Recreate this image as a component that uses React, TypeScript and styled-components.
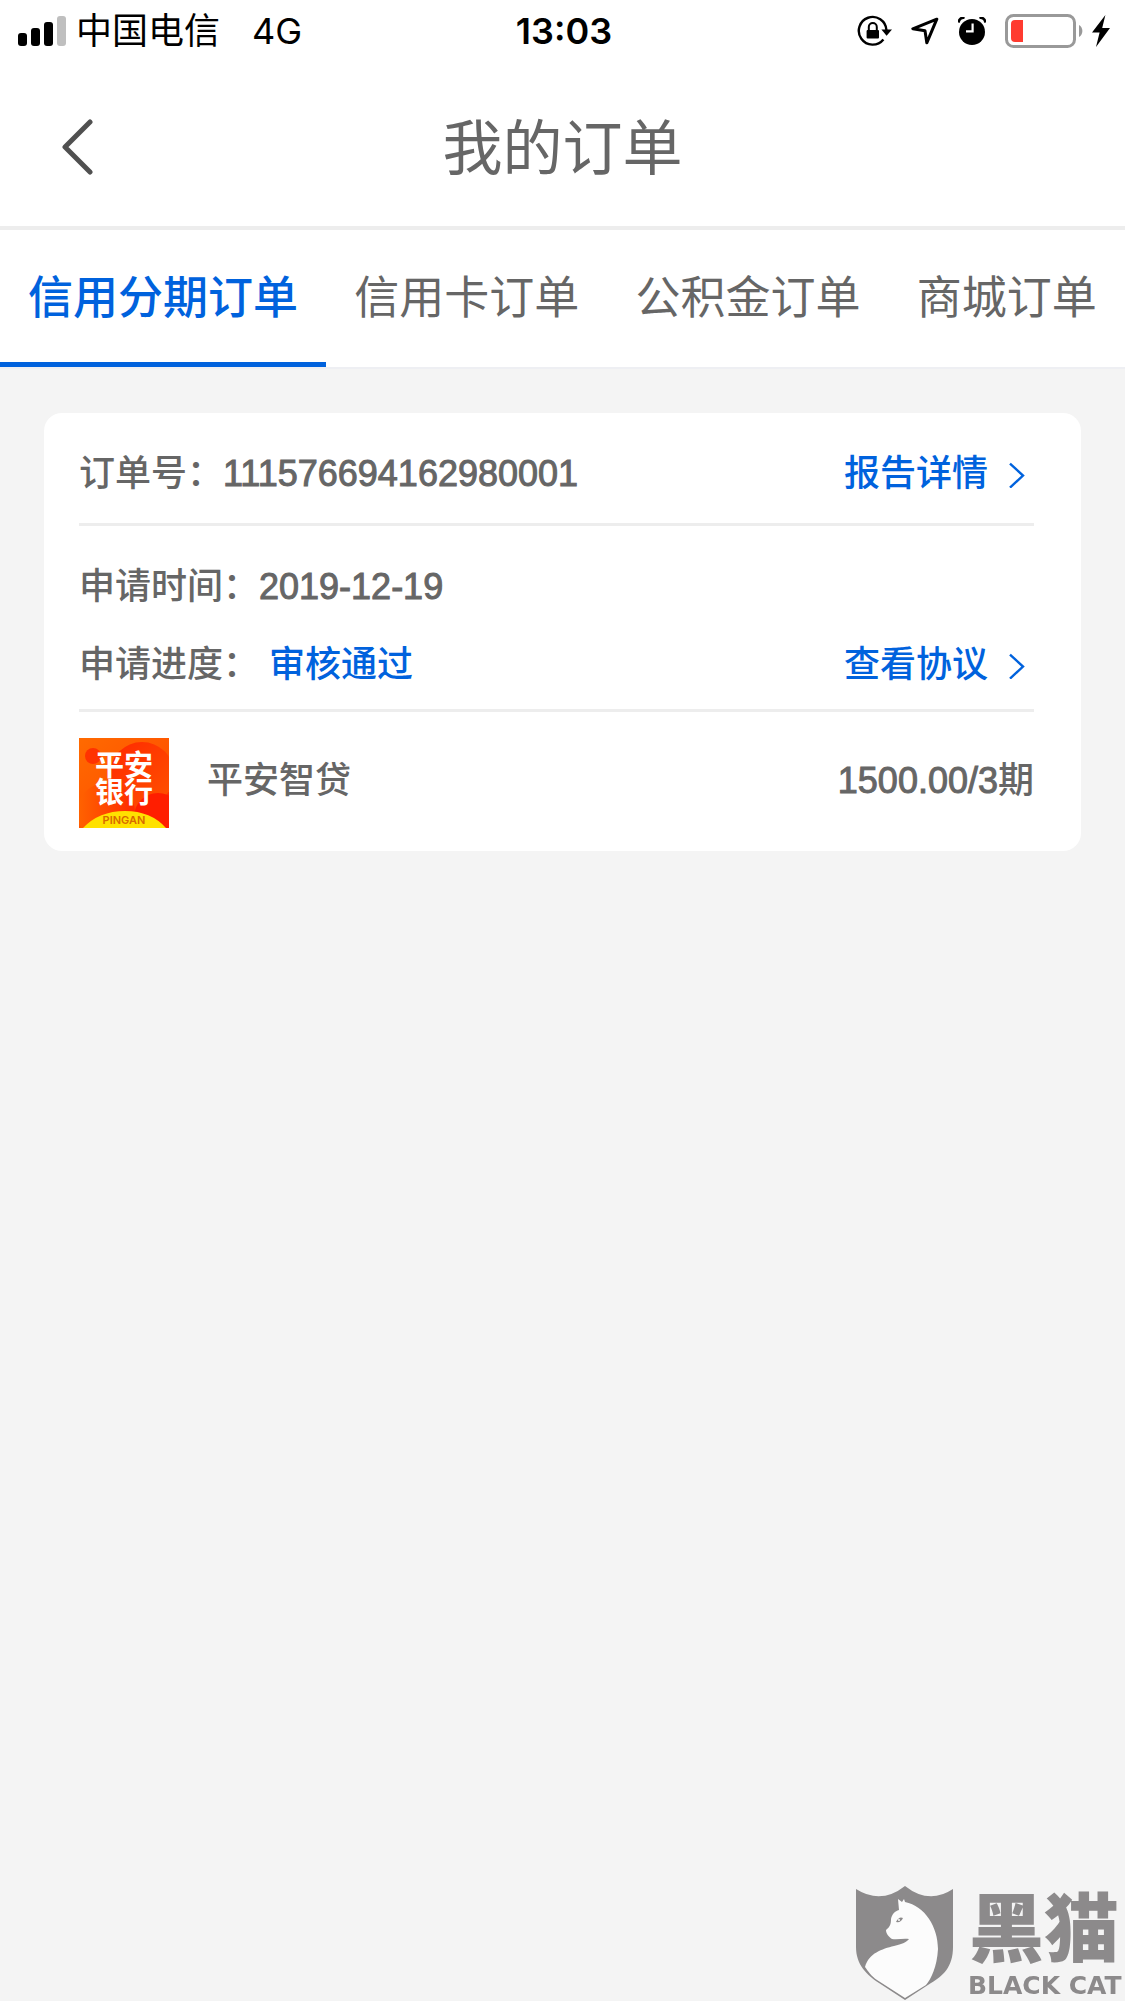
import React from "react";
import styled, { createGlobalStyle } from "styled-components";

const BLUE = "#0062dd";
const GREY = "#666666";
const LINE = "#ededed";

const GlobalStyle = createGlobalStyle`
  *, *::before, *::after { box-sizing: border-box; }
  body {
    margin: 0;
    background: #f4f4f4;
    color: ${GREY};
    font-family: "Liberation Sans", "Noto Sans CJK SC", sans-serif;
  }
  button { border: 0; padding: 0; background: none; font: inherit; color: inherit; cursor: pointer; }
  svg { display: block; flex: none; }
`;

const Page = styled.div`
  min-height: 100vh;
  display: flex;
  flex-direction: column;
`;

const StatusBar = styled.div`
  display: grid;
  grid-template-columns: 1fr auto 1fr;
  align-items: center;
  height: 60px;
  padding: 0 15px 0 18px;
  background: #fff;
  color: #000;
  font-family: Inter, "Noto Sans CJK SC", sans-serif;
  font-size: 36px;
  line-height: 62px;
`;

const StatusLeft = styled.div`
  display: flex;
  align-items: center;
  gap: 10px;
`;

const Network = styled.span`
  margin-left: 22px;
`;

const Time = styled.time`
  font-weight: 600;
`;

const StatusRight = styled.div`
  display: flex;
  align-items: center;
  justify-content: flex-end;
  gap: 19px;
`;

const Power = styled.div`
  display: flex;
  align-items: center;
  gap: 8px;
`;

const Header = styled.header`
  display: grid;
  grid-template-columns: 120px 1fr 120px;
  align-items: center;
  height: 170px;
  padding-top: 4px;
  background: #fff;
  border-bottom: 4px solid ${LINE};
`;

const BackButton = styled.button`
  display: flex;
  align-items: center;
  height: 100%;
  padding: 4px 0 0 60px;
`;

const Title = styled.h1`
  margin: 0;
  padding-bottom: 2px;
  text-align: center;
  font-family: "Noto Sans CJK SC", sans-serif;
  font-size: 60px;
  font-weight: 400;
  line-height: 80px;
`;

const Tabs = styled.nav`
  display: flex;
  background: #fff;
  border-bottom: 2px solid #eeeff3;
`;

const Tab = styled.button<{ $active?: boolean }>`
  flex: 1 0 auto;
  height: 137px;
  padding: 0 28px 2px;
  font-family: "Noto Sans CJK SC", sans-serif;
  font-size: 45px;
  line-height: 130px;
  border-bottom: 5px solid ${(p) => (p.$active ? BLUE : "transparent")};
  color: ${(p) => (p.$active ? BLUE : GREY)};
  font-weight: ${(p) => (p.$active ? 500 : 400)};
`;

const Main = styled.main`
  padding: 44px;
`;

const Card = styled.article`
  padding: 0 47px 0 35px;
  border-radius: 18px;
  background: #fff;
  font-size: 36px;
  font-weight: 500;
  line-height: 78px;
`;

const Section = styled.section<{ $bottom: number }>`
  padding: 22px 0 ${(p) => p.$bottom}px;
  border-bottom: 3px solid ${LINE};
`;

const Row = styled.div`
  display: flex;
  align-items: center;
  justify-content: space-between;
`;

const Digits = styled.span`
  -webkit-text-stroke: 1px currentColor;
`;

const Status = styled.strong`
  margin-left: 10px;
  color: ${BLUE};
  font-weight: 500;
`;

const CardLink = styled.a`
  display: flex;
  align-items: center;
  gap: 20px;
  padding-right: 9px;
  color: ${BLUE};
  text-decoration: none;
`;

const Product = styled.div`
  display: flex;
  align-items: center;
  gap: 38px;
  padding: 26px 0 23px;
`;

const ProductInfo = styled.div`
  flex: 1;
  display: flex;
  justify-content: space-between;
  padding-bottom: 4px;
`;

const Watermark = styled.div`
  position: fixed;
  right: 0;
  bottom: 0;
`;

const Signal = () => (
  <svg width="48" height="30" viewBox="0 0 48 30" aria-hidden="true">
    <rect x="0" y="17" width="9" height="13" rx="3" />
    <rect x="13" y="12" width="9" height="18" rx="3" />
    <rect x="26" y="6" width="9" height="24" rx="3" />
    <rect x="39" y="0" width="9" height="30" rx="3" fill="#bfbfbf" />
  </svg>
);

const RotationLock = () => (
  <svg width="35" height="32" viewBox="0 0 35 32" aria-hidden="true">
    <path d="M26.4 24.4A13.8 13.8 0 1 1 29.4 15" fill="none" stroke="#000" strokeWidth="2.4" />
    <path d="M24.4 14.4H35L29.6 20.8Z" />
    <rect x="9.6" y="15" width="12.4" height="8.4" rx="1" />
    <path d="M11.8 16V12a4 4 0 0 1 8 0v4" fill="none" stroke="#000" strokeWidth="2" />
  </svg>
);

const Location = () => (
  <svg width="28" height="28" viewBox="0 0 28 28" aria-hidden="true">
    <path
      d="M25.8 2.2L1.8 11.8L14 13.8L15.8 25.8Z"
      fill="none"
      stroke="#000"
      strokeWidth="3"
      strokeLinejoin="round"
    />
  </svg>
);

const Alarm = () => (
  <svg width="28" height="28" viewBox="0 0 28 28" aria-hidden="true">
    <circle cx="14" cy="15" r="13" />
    <path d="M.6 5.6A5 5 0 0 1 6.6.8M27.4 5.6A5 5 0 0 0 21.4.8" fill="none" stroke="#000" strokeWidth="2.6" />
    <path d="M14.6 6.4V14.4H8" fill="none" stroke="#fff" strokeWidth="2.2" />
  </svg>
);

const Battery = () => (
  <svg width="79" height="34" viewBox="0 0 79 34" aria-hidden="true">
    <rect x="1.5" y="1.5" width="68" height="31" rx="7" fill="none" stroke="#999" strokeWidth="3" />
    <path d="M10 6h8v22h-8a4 4 0 0 1-4-4V10a4 4 0 0 1 4-4Z" fill="#ff3b30" />
    <path d="M74 11a7 7 0 0 1 0 12Z" fill="#999" />
  </svg>
);

const Bolt = () => (
  <svg width="18" height="32" viewBox="0 0 18 32" aria-hidden="true">
    <path d="M13.4 0L0 17.4H7.6L4 32L18 13H10.2Z" />
  </svg>
);

const BackIcon = () => (
  <svg width="34" height="56" viewBox="0 0 34 56" aria-hidden="true">
    <path
      d="M30 3L5 28L30 53"
      fill="none"
      stroke="#505050"
      strokeWidth="5"
      strokeLinecap="round"
      strokeLinejoin="round"
    />
  </svg>
);

const Chevron = () => (
  <svg width="17" height="28" viewBox="0 0 17 28" aria-hidden="true">
    <path d="M2 3.6L15 15.6L2 27.6" fill="none" stroke={BLUE} strokeWidth="2.4" />
  </svg>
);

const BankLogo = () => (
  <svg width="90" height="90" viewBox="0 0 90 90" role="img" aria-label="平安银行 PINGAN">
    <defs>
      <linearGradient id="base" x1="0" y1="0" x2="1" y2="1">
        <stop offset="0" stopColor="#ff6a00" />
        <stop offset="0.6" stopColor="#ff5500" />
        <stop offset="1" stopColor="#ff1000" />
      </linearGradient>
      <linearGradient id="orb" x1="0" y1="0" x2="1" y2="1">
        <stop offset="0" stopColor="#ff2800" />
        <stop offset="1" stopColor="#ff5400" />
      </linearGradient>
      <linearGradient id="hill" x1="0" y1="0" x2="1" y2="0">
        <stop offset="0" stopColor="#ff6400" />
        <stop offset="1" stopColor="#ff2a00" />
      </linearGradient>
    </defs>
    <rect width="90" height="90" fill="url(#base)" />
    <circle cx="14" cy="18" r="8" fill="#ff3200" />
    <circle cx="63" cy="36" r="32" fill="url(#orb)" />
    <circle cx="27" cy="74" r="29" fill="url(#hill)" />
    <circle cx="79" cy="79" r="24" fill="#ff1e00" />
    <path d="M4 90Q20 73 46 73T87 90Z" fill="#ffe100" />
    <g fill="#fff" fontFamily="'Noto Sans CJK SC', sans-serif" fontSize="29" fontWeight="700">
      <text x="16" y="38">平安</text>
      <text x="16" y="65">银行</text>
    </g>
    <text x="45" y="86" textAnchor="middle" fontFamily="Inter, sans-serif" fontSize="11" fontWeight="600" fill="#d86a00">
      PINGAN
    </text>
  </svg>
);

const BlackCat = () => (
  <svg width="270" height="116" viewBox="0 0 270 116" role="img" aria-label="黑猫 BLACK CAT">
    <path
      d="M1 4Q26 20 50 1Q74 20 98 4V62C98 82 88 91 76 98L50 115L24 98C12 90 1 80 1 62Z"
      fill="#8c8a8b"
    />
    <path
      d="M43 14L47 17L49 14L50 17C70 21 83 42 83 64C82 82 76 94 71 100L50 113L22 95C16 91 13 86 10 82C14 68 27 64 39 61C47 59 52 57 54 54C48 53 43 55 37 54C34 52 31 49 31 45C35 42 36 39 36 34C37 29 40 26 44 25Z"
      fill="#fcfcfc"
    />
    <path d="M41 37Q44 31 48 33Q46 38 41 37Z" fill="#8c8a8b" />
    <circle cx="44" cy="35" r="1" fill="#fff" />
    <g fill="#8c8a8b">
      <text x="114" y="71" fontFamily="'Noto Sans CJK SC', sans-serif" fontSize="75" fontWeight="900">
        黑猫
      </text>
      <text x="113" y="109" fontFamily="'DejaVu Sans', sans-serif" fontSize="25" fontWeight="700">
        BLACK CAT
      </text>
    </g>
  </svg>
);

const tabs = ["信用分期订单", "信用卡订单", "公积金订单", "商城订单"];

export default function App() {
  return (
    <Page>
      <GlobalStyle />
      <StatusBar>
        <StatusLeft>
          <Signal />
          <span>中国电信</span>
          <Network>4G</Network>
        </StatusLeft>
        <Time>13:03</Time>
        <StatusRight>
          <RotationLock />
          <Location />
          <Alarm />
          <Power>
            <Battery />
            <Bolt />
          </Power>
        </StatusRight>
      </StatusBar>
      <Header>
        <BackButton aria-label="返回">
          <BackIcon />
        </BackButton>
        <Title>我的订单</Title>
      </Header>
      <Tabs>
        {tabs.map((label, i) => (
          <Tab key={label} $active={i === 0}>
            {label}
          </Tab>
        ))}
      </Tabs>
      <Main>
        <Card>
          <Section $bottom={10}>
            <Row>
              <span>
                订单号：<Digits>111576694162980001</Digits>
              </span>
              <CardLink href="#report">
                报告详情
                <Chevron />
              </CardLink>
            </Row>
          </Section>
          <Section $bottom={5}>
            <Row>
              <span>
                申请时间：<Digits>2019-12-19</Digits>
              </span>
            </Row>
            <Row>
              <span>
                申请进度：<Status>审核通过</Status>
              </span>
              <CardLink href="#agreement">
                查看协议
                <Chevron />
              </CardLink>
            </Row>
          </Section>
          <Product>
            <BankLogo />
            <ProductInfo>
              <span>平安智贷</span>
              <span>
                <Digits>1500.00/3</Digits>期
              </span>
            </ProductInfo>
          </Product>
        </Card>
      </Main>
      <Watermark>
        <BlackCat />
      </Watermark>
    </Page>
  );
}
